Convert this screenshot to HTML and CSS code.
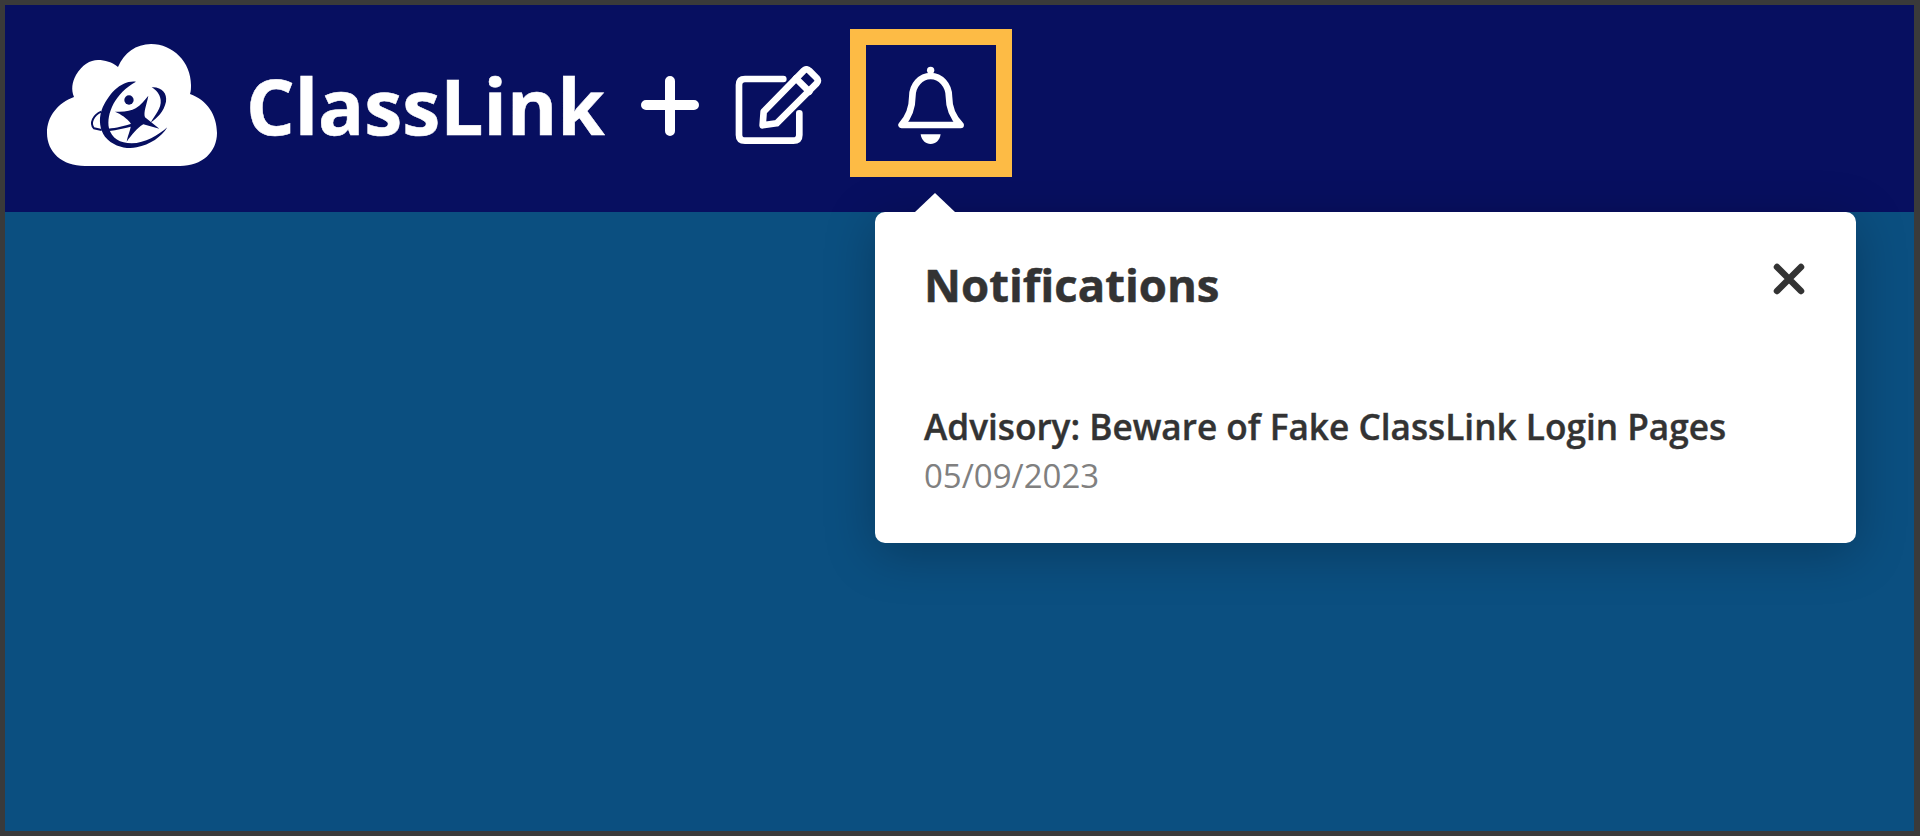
FILE: index.html
```html
<!DOCTYPE html>
<html lang="en">
<head>
    <meta charset="UTF-8">
    <title>ClassLink Notifications</title>
    <link rel="stylesheet" href="styles.css">
</head>
<body>
    <header class="top-bar">
        <svg class="logo" viewBox="46 44 172 123" aria-hidden="true">
            <path fill="#fff" d="M85 166C62 166 47 152 47 133C47 116 58 103 74 97C71 90 72 82 76 75C82 65 90 60 98 60C105 60 112 62 118 67C124 53 136 44 151 44C173 44 191 62 191 85C191 88 191 91 190 94C207 100 217 115 217 133C217 152 202 166 180 166Z"/>
            <g transform="translate(30 30) scale(.3333)" fill="#070f60">
                <path d="M318 155C275 150 235 190 215 240C205 270 210 300 225 320C250 350 290 358 320 352C360 345 395 320 412 292C385 315 345 340 305 340C270 340 245 325 237 295C228 250 255 190 318 155Z"/>
                <path class="logo-loop" d="M214 245C190 255 178 280 192 295L215 300"/>
                <path d="M365 172C395 170 412 190 408 215C402 245 380 265 362 278C375 255 395 235 392 210C390 192 378 180 365 172Z"/>
                <circle cx="297" cy="210" r="14"/>
                <path d="M255 245C282 247 303 243 317 235C332 225 345 210 355 197C350 225 340 245 345 262L388 296L340 283C320 295 305 315 290 335C295 310 304 298 302 280C292 265 272 252 255 245Z"/>
                <path d="M235 296C260 294 280 289 310 280L308 289C285 295 260 301 238 303Z"/>
            </g>
        </svg>
        <span class="brand">ClassLink</span>
        <svg class="plus" viewBox="0 0 58 60" aria-hidden="true">
            <path d="M29 5V55M5 29H53"/>
        </svg>
        <svg class="edit" viewBox="735 66 88 79" aria-hidden="true">
            <g transform="translate(620 10) scale(.3333)">
                <path d="M490 207H375Q357 207 357 225V375Q357 392 375 392H520Q538 392 538 375V310"/>
                <path d="M428 346L431 305L552 181Q560 175 568 182L590 204Q597 212 590 220L470 340Z"/>
                <path d="M528 205L568 245"/>
            </g>
        </svg>
        <div class="bell-box">
            <svg class="bell" viewBox="898 66 68 79" aria-hidden="true">
                <g transform="translate(620 10) scale(.3333)">
                    <path class="bell-line" d="M848 345H1025C1000 320 990 290 990 260C990 225 965 198 935 198C905 198 880 225 880 260C880 290 870 320 848 345Z"/>
                    <circle class="bell-fill" cx="935" cy="181" r="11"/>
                    <path class="bell-fill" d="M905 373H965C962 392 950 402 935 402C920 402 908 392 905 373Z"/>
                </g>
            </svg>
        </div>
    </header>

    <main class="content">
        <div class="popup">
            <div class="popup-head">
                <h2>Notifications</h2>
                <svg class="close" viewBox="0 0 32 32" aria-hidden="true">
                    <path d="M4 4L28 28M28 4L4 28"/>
                </svg>
            </div>
            <p class="note-title">Advisory: Beware of Fake ClassLink Login Pages</p>
            <p class="note-date">05/09/2023</p>
        </div>
    </main>
</body>
</html>
```

FILE: styles.css
```css
* {
    box-sizing: border-box;
}
body {
    margin: 0;
    height: 100vh;
    display: flex;
    flex-direction: column;
    overflow: hidden;
    border: 5px solid #3a3a3a;
    border-right-width: 6px;
    background-color: #0b4f80;
    font-family: "Open Sans", Arial, sans-serif;
}
.top-bar {
    display: flex;
    align-items: center;
    height: 207px;
    padding: 0 0 6px 41px;
    background: #070f60;
    color: #fff;
}
.logo {
    width: 172px;
    height: 123px;
}
.logo-loop {
    fill: none;
    stroke: #070f60;
    stroke-width: 6;
}
.brand {
    margin-left: 28px;
    font-size: 76.5px;
    font-weight: 700;
    line-height: 1;
    -webkit-text-stroke: 0.5px #fff;
}
.plus {
    width: 58px;
    height: 60px;
    margin-left: 36px;
    fill: none;
    stroke: #fff;
    stroke-width: 10;
    stroke-linecap: round;
}
.edit {
    width: 88px;
    height: 79px;
    margin-left: 36px;
    fill: none;
    stroke: #fff;
    stroke-width: 20;
    stroke-linejoin: round;
    stroke-linecap: round;
}
.bell-box {
    display: flex;
    align-items: center;
    justify-content: center;
    width: 162px;
    height: 148px;
    margin: 0 0 5px 27px;
    border: 16px solid #fdbb45;
}
.bell {
    width: 68px;
    height: 79px;
    margin-top: 5px;
}
.bell-line {
    fill: none;
    stroke: #fff;
    stroke-width: 20;
    stroke-linejoin: round;
}
.bell-fill {
    fill: #fff;
}
.content {
    position: relative;
    flex: 1;
}
.popup {
    position: absolute;
    top: 0;
    left: 870px;
    width: 981px;
    height: 331px;
    padding: 45px 50px 45px 49px;
    background: #fff;
    border-radius: 10px;
    box-shadow: 0 10px 50px rgba(0, 0, 0, 0.25);
    color: #333;
}
.popup::before {
    content: "";
    position: absolute;
    top: -19px;
    left: 40px;
    width: 40px;
    height: 19px;
    background: #fff;
    clip-path: polygon(50% 0, 100% 100%, 0 100%);
}
.popup-head {
    display: flex;
    justify-content: space-between;
    align-items: flex-start;
    height: 147px;
}
.popup-head h2 {
    margin: 0;
    font-size: 45.5px;
    font-weight: 700;
    line-height: 54px;
    -webkit-text-stroke: 0.5px #333;
}
.close {
    width: 32px;
    height: 32px;
    margin: 6px 1px 0 0;
    fill: none;
    stroke: #333;
    stroke-width: 6.5;
    stroke-linecap: round;
}
.note-title {
    margin: 0;
    font-size: 35.2px;
    font-weight: 600;
    line-height: 44px;
    -webkit-text-stroke: 0.4px #333;
}
.note-date {
    margin: 8px 0 0;
    font-size: 33px;
    line-height: 40px;
    color: #808080;
}
```
